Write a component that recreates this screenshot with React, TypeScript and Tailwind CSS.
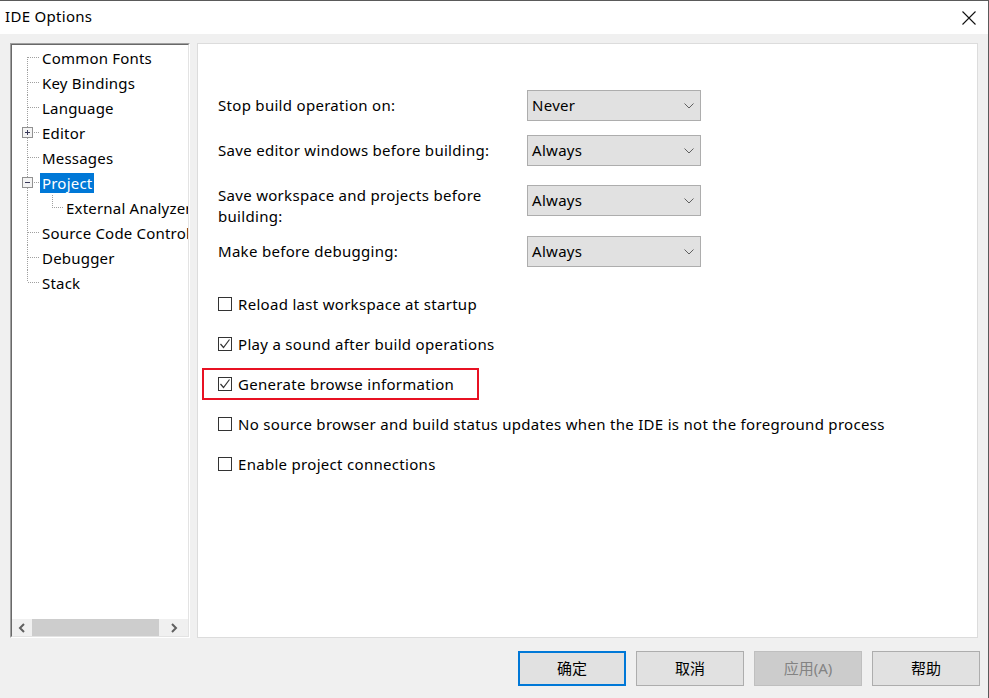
import React from 'react';

const font = { fontFamily: '"Noto Sans", "Noto Sans CJK SC", sans-serif' };

type TreeItem = {
  label: string;
  expander?: '+' | '-';
  selected?: boolean;
  child?: boolean;
};

const treeItems: TreeItem[] = [
  { label: 'Common Fonts' },
  { label: 'Key Bindings' },
  { label: 'Language' },
  { label: 'Editor', expander: '+' },
  { label: 'Messages' },
  { label: 'Project', expander: '-', selected: true },
  { label: 'External Analyzer', child: true },
  { label: 'Source Code Control' },
  { label: 'Debugger' },
  { label: 'Stack' },
];

const Gutter: React.FC<{ item: TreeItem; first: boolean; last: boolean }> = ({ item, first, last }) => {
  const width = item.child ? 52 : 28;
  const y1 = first ? 12 : 0;
  const y2 = last ? 12 : 25;
  return (
    <svg width={width} height={25} className="shrink-0" shapeRendering="crispEdges">
      <line x1={15.5} y1={y1} x2={15.5} y2={y2} stroke="#a0a0a0" strokeDasharray="1 1" />
      {item.child ? (
        <>
          <line x1={40.5} y1={0} x2={40.5} y2={12} stroke="#a0a0a0" strokeDasharray="1 1" />
          <line x1={40} y1={12.5} x2={52} y2={12.5} stroke="#a0a0a0" strokeDasharray="1 1" />
        </>
      ) : (
        <line x1={16} y1={12.5} x2={28} y2={12.5} stroke="#a0a0a0" strokeDasharray="1 1" />
      )}
      {item.expander && (
        <>
          <rect x={10.5} y={7.5} width={10} height={10} fill="#f4f4f4" stroke="#919191" />
          <line x1={13} y1={12.5} x2={18} y2={12.5} stroke="#3a3a5a" />
          {item.expander === '+' && <line x1={15.5} y1={10} x2={15.5} y2={15} stroke="#3a3a5a" />}
        </>
      )}
    </svg>
  );
};

const Select: React.FC<{ value: string }> = ({ value }) => (
  <div className="flex h-[31px] w-[174px] items-center justify-between border border-[#adadad] bg-[#e1e1e1] pl-[4px] pr-[6px] text-[15px] tracking-[0.3px] text-black">
    <span>{value}</span>
    <svg width="10" height="6" viewBox="0 0 10 6">
      <path d="M0.5 0.5 L5 5 L9.5 0.5" fill="none" stroke="#606060" strokeWidth="1" />
    </svg>
  </div>
);

const Checkbox: React.FC<{ checked?: boolean; label: string }> = ({ checked, label }) => (
  <div className="flex items-center gap-[6px] text-[15px] tracking-[0.3px] text-black">
    <div className="flex h-[14px] w-[14px] items-center justify-center border border-[#333333] bg-white">
      {checked && (
        <svg width="12" height="12" viewBox="0 0 12 12">
          <path d="M1.5 6 L4.5 9.5 L10.5 1.5" fill="none" stroke="#333333" strokeWidth="1.2" />
        </svg>
      )}
    </div>
    <span>{label}</span>
  </div>
);

const Button: React.FC<{ label: string; primary?: boolean; disabled?: boolean }> = ({ label, primary, disabled }) => (
  <div
    className={
      'flex h-[35px] w-[108px] items-center justify-center text-[15px] ' +
      (primary
        ? 'border-2 border-[#0078d7] bg-[#e1e1e1] text-black'
        : disabled
        ? 'border border-[#bfbfbf] bg-[#cccccc] text-[#838383]'
        : 'border border-[#adadad] bg-[#e1e1e1] text-black')
    }
  >
    {label}
  </div>
);

export default function App() {
  return (
    <div className="flex h-[698px] w-[989px] flex-col border-r border-t border-[#5a5a5a] bg-[#f0f0f0]" style={font}>
      <div className="flex h-[33px] shrink-0 items-center justify-between bg-white pl-[5px] pr-[12px] text-[15px] tracking-[0.3px] text-black">
        <span className="-mt-[2px]">IDE Options</span>
        <svg width="14" height="14" viewBox="0 0 14 14">
          <path d="M0.5 0.5 L13.5 13.5 M13.5 0.5 L0.5 13.5" stroke="#111" strokeWidth="1.1" />
        </svg>
      </div>

      <div className="flex gap-[7px] pl-[10px] pt-[9px]">
        {/* tree */}
        <div className="flex h-[595px] w-[180px] flex-col border border-b-white border-l-[#a0a0a0] border-r-white border-t-[#a0a0a0]">
          <div className="flex flex-1 flex-col overflow-hidden border border-b-[#e3e3e3] border-l-[#696969] border-r-[#e3e3e3] border-t-[#696969] bg-white">
            <div className="flex flex-1 flex-col overflow-hidden">
              {treeItems.map((item, i) => (
                <div key={item.label} className="flex h-[25px] items-center whitespace-nowrap">
                  <Gutter item={item} first={i === 0} last={i === treeItems.length - 1} />
                  <span
                    className={
                      'px-[2px] text-[15px] leading-[20px] tracking-[0.2px] ' +
                      (item.selected ? 'bg-[#0078d7] text-white' : 'text-black')
                    }
                  >
                    {item.label}
                  </span>
                </div>
              ))}
            </div>
            <div className="flex h-[17px] shrink-0 items-center bg-[#f0f0f0]">
              <div className="flex w-[20px] justify-center">
                <svg width="8" height="10" viewBox="0 0 8 10">
                  <path d="M6 1 L2 5 L6 9" fill="none" stroke="#606060" strokeWidth="2" />
                </svg>
              </div>
              <div className="h-[17px] w-[127px] bg-[#cdcdcd]" />
              <div className="flex flex-1 justify-center">
                <svg width="8" height="10" viewBox="0 0 8 10">
                  <path d="M2 1 L6 5 L2 9" fill="none" stroke="#606060" strokeWidth="2" />
                </svg>
              </div>
            </div>
          </div>
        </div>

        {/* options page */}
        <div className="flex h-[595px] w-[781px] flex-col border border-[#dcdcdc] bg-white pl-[20px] pt-[46px]">
          <div className="flex h-[31px] items-center">
            <span className="w-[309px] text-[15px] tracking-[0.3px] text-black">Stop build operation on:</span>
            <Select value="Never" />
          </div>
          <div className="mt-[14px] flex h-[31px] items-center">
            <span className="w-[309px] text-[15px] tracking-[0.3px] text-black">Save editor windows before building:</span>
            <Select value="Always" />
          </div>
          <div className="mt-[19px] flex h-[31px] items-center">
            <span className="w-[309px] pt-[10px] text-[15px] leading-[21px] tracking-[0.3px] text-black">
              Save workspace and projects before
              <br />
              building:
            </span>
            <Select value="Always" />
          </div>
          <div className="mt-[20px] flex h-[31px] items-center">
            <span className="w-[309px] text-[15px] tracking-[0.3px] text-black">Make before debugging:</span>
            <Select value="Always" />
          </div>

          <div className="mt-[27px] flex flex-col gap-[20px]">
            <div className="flex h-[20px] items-center">
              <Checkbox label="Reload last workspace at startup" />
            </div>
            <div className="flex h-[20px] items-center">
              <Checkbox checked label="Play a sound after build operations" />
            </div>
            <div className="-ml-[16px] -my-[6px] flex h-[32px] w-[277px] items-center border-2 border-[#e81123] pl-[14px]">
              <Checkbox checked label="Generate browse information" />
            </div>
            <div className="flex h-[20px] items-center">
              <Checkbox label="No source browser and build status updates when the IDE is not the foreground process" />
            </div>
            <div className="flex h-[20px] items-center">
              <Checkbox label="Enable project connections" />
            </div>
          </div>
        </div>
      </div>

      <div className="flex gap-[10px] pl-[518px] pt-[13px]">
        <Button label="确定" primary />
        <Button label="取消" />
        <Button label="应用(A)" disabled />
        <Button label="帮助" />
      </div>
    </div>
  );
}
